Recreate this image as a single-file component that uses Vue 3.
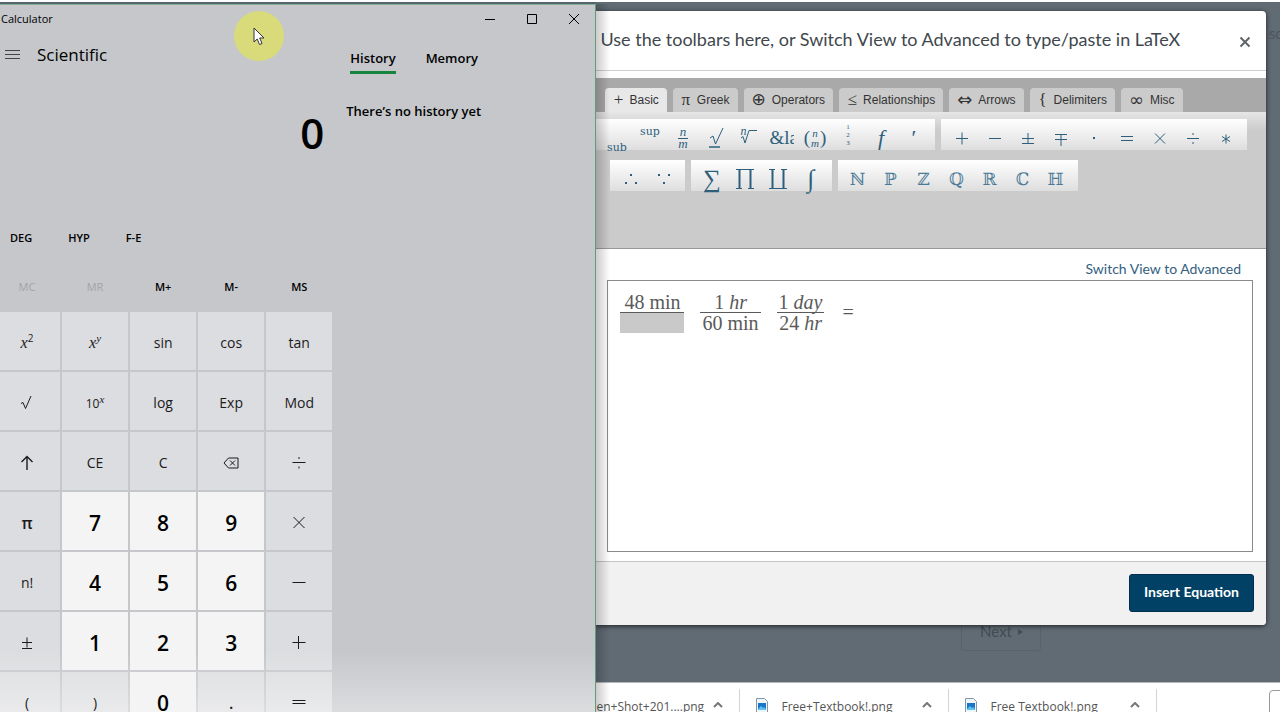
<script setup>
import { ref } from 'vue';

const calcTab = ref('History');
const activeTab = ref('Basic');

const memoryKeys = [
  { label: 'MC', disabled: true },
  { label: 'MR', disabled: true },
  { label: 'M+' },
  { label: 'M-' },
  { label: 'MS' },
];

// paths are drawn on a 16x16 grid
const keys = [
  { label: 'x', sup: '2', italic: true },
  { label: 'x', sup: 'y', italic: true, supItalic: true },
  { label: 'sin' },
  { label: 'cos' },
  { label: 'tan' },
  { name: 'Square root', path: 'M2 8.5 L4 7.5 L6.5 13.5 L12 1' },
  { label: '10', sup: 'x', supItalic: true, small: true },
  { label: 'log' },
  { label: 'Exp' },
  { label: 'Mod' },
  { name: 'Shift', path: 'M8 15 V2 M2.5 7 L8 1.5 L13.5 7', bold: true },
  { label: 'CE' },
  { label: 'C' },
  { name: 'Backspace', path: 'M5.5 3 H15 V13 H5.5 L1 8 Z M7 5.5 L12 10.5 M12 5.5 L7 10.5' },
  { name: 'Divide', path: 'M1.5 7.5 H14.5 M8 2 V4 M8 11.5 V13.5' },
  { label: 'π', strong: true },
  { label: '7', digit: true },
  { label: '8', digit: true },
  { label: '9', digit: true },
  { name: 'Multiply', path: 'M2.5 2 L13.5 13 M13.5 2 L2.5 13' },
  { label: 'n!' },
  { label: '4', digit: true },
  { label: '5', digit: true },
  { label: '6', digit: true },
  { name: 'Minus', path: 'M1.5 7.5 H14.5' },
  { name: 'Plus minus', path: 'M3 7.5 H13 M8 2.5 V12.5 M3 13.5 H13' },
  { label: '1', digit: true },
  { label: '2', digit: true },
  { label: '3', digit: true },
  { name: 'Plus', path: 'M1.5 7.5 H14.5 M7.5 1 V14' },
  { label: '(' },
  { label: ')' },
  { label: '0', digit: true },
  { label: '.', strong: true },
  { name: 'Equals', path: 'M1.5 5.5 H14.5 M1.5 8.5 H14.5' },
];

const tabs = [
  { icon: '+', label: 'Basic' },
  { icon: 'π', label: 'Greek' },
  { icon: '⊕', label: 'Operators' },
  { icon: '≤', label: 'Relationships' },
  { icon: '⇔', label: 'Arrows', wide: true },
  { icon: '{', label: 'Delimiters' },
  { icon: '∞', label: 'Misc', wide: true },
];

const signs = [
  { name: 'plus', path: 'M2 8.5 H14 M8 2.5 V14.5' },
  { name: 'minus', path: 'M2 8.5 H14' },
  { name: 'plus or minus', path: 'M2 8.5 H14 M8 3 V14 M2 13.5 H14' },
  { name: 'minus or plus', path: 'M2 4.5 H14 M2 9.5 H14 M8 4.5 V16' },
  { name: 'dot', path: 'M7 8.5 H9 M7 7.5 H9' },
  { name: 'equals', path: 'M2 6.5 H14 M2 10.5 H14' },
  { name: 'times', path: 'M3 3.5 L13 13.5 M13 3.5 L3 13.5' },
  { name: 'divide', path: 'M2 8.5 H14 M8 3 V5 M8 12 V14' },
  { name: 'asterisk', path: 'M8 4.5 V13.5 M4 6.5 L12 11.5 M12 6.5 L4 11.5' },
];

const letters = ['ℕ', 'ℙ', 'ℤ', 'ℚ', 'ℝ', 'ℂ', 'ℍ'];

const downloads = ['en+Shot+201....png', 'Free+Textbook!.png', 'Free Textbook!.png'];
</script>

<template>
  <div class="screen">
    <div class="desktop">
      <section class="calculator">
        <header class="title-bar">
          <span class="title">Calculator</span>
          <button class="window-btn" aria-label="Minimize">
            <svg viewBox="0 0 12 12"><path d="M1 6.5 H11" /></svg>
          </button>
          <button class="window-btn" aria-label="Maximize">
            <svg viewBox="0 0 12 12"><path d="M1.5 1.5 H10.5 V10.5 H1.5 Z" /></svg>
          </button>
          <button class="window-btn" aria-label="Close">
            <svg viewBox="0 0 12 12"><path d="M1 1 L11 11 M11 1 L1 11" /></svg>
          </button>
        </header>
        <div class="calc-body">
          <div class="calc-main">
            <div class="mode">
              <button class="menu-btn" aria-label="Menu">
                <svg viewBox="0 0 15 12"><path d="M0 1.5 H15 M0 5.5 H15 M0 9.5 H15" /></svg>
              </button>
              <span>Scientific</span>
            </div>
            <output class="display">0</output>
            <div class="options">
              <button>DEG</button>
              <button>HYP</button>
              <button>F-E</button>
            </div>
            <div class="memory-row">
              <button v-for="key in memoryKeys" :key="key.label" :disabled="key.disabled">{{ key.label }}</button>
            </div>
            <div class="keypad">
              <button
                v-for="(key, i) in keys"
                :key="i"
                class="key"
                :class="{ digit: key.digit, strong: key.strong, small: key.small }"
                :aria-label="key.name"
              >
                <svg v-if="key.path" viewBox="0 0 16 16" :class="{ bold: key.bold }"><path :d="key.path" /></svg>
                <span v-else :class="{ italic: key.italic }">{{ key.label }}<sup v-if="key.sup" :class="{ italic: key.supItalic }">{{ key.sup }}</sup></span>
              </button>
            </div>
          </div>
          <aside class="history">
            <nav class="history-tabs">
              <button
                v-for="name in ['History', 'Memory']"
                :key="name"
                :class="{ active: calcTab === name }"
                @click="calcTab = name"
              >{{ name }}</button>
            </nav>
            <p>There’s no history yet</p>
          </aside>
        </div>
        <div class="pointer">
          <svg viewBox="0 0 12 19"><path d="M1 1 V15 L4.2 12 L6.5 17.5 L9 16.5 L6.7 11 H11 Z" /></svg>
        </div>
      </section>

      <section class="browser">
        <main class="page">
          <span class="page-text">scr</span>
          <button class="next-btn">Next <i></i></button>
          <div class="dialog" role="dialog" aria-labelledby="dialog-title">
            <header class="dialog-header">
              <h1 id="dialog-title">Use the toolbars here, or Switch View to Advanced to type/paste in LaTeX</h1>
              <button class="close-btn" aria-label="Close">
                <svg viewBox="0 0 12 12"><path d="M1.5 1.5 L10.5 10.5 M10.5 1.5 L1.5 10.5" /></svg>
              </button>
            </header>
            <div class="tabs">
              <button
                v-for="tab in tabs"
                :key="tab.label"
                class="tab"
                :class="{ active: activeTab === tab.label }"
                @click="activeTab = tab.label"
              ><span class="tab-icon" :class="{ wide: tab.wide }">{{ tab.icon }}</span>{{ tab.label }}</button>
            </div>
            <div class="toolbar">
              <div class="tool-row">
                <div class="group">
                  <button class="low">sub</button>
                  <button class="high">sup</button>
                  <button><span class="frac"><i>n</i><i>m</i></span></button>
                  <button aria-label="square root">
                    <svg class="tall" viewBox="0 0 20 24"><path d="M4 12 L7 10 L9.5 18 L17 2" /><path class="thick" d="M3 21 H14" /></svg>
                  </button>
                  <button class="root" aria-label="nth root">
                    <i>n</i><svg class="tall" viewBox="0 0 16 24"><path d="M0 12 L2 10.5 L4 17 L8 4.5 H16" /></svg>
                  </button>
                  <button><span class="clip">&amp;la</span></button>
                  <button class="choose"><span class="paren">(</span><span class="binom"><i>n</i><i>m</i></span><span class="paren">)</span></button>
                  <button class="stack"><span>1</span><span>2</span><span>3</span></button>
                  <button class="func"><i>f</i></button>
                  <button class="prime">′</button>
                </div>
                <div class="group">
                  <button v-for="sign in signs" :key="sign.name" :aria-label="sign.name">
                    <svg class="sign" viewBox="0 0 16 16"><path :d="sign.path" /></svg>
                  </button>
                </div>
              </div>
              <div class="tool-row second">
                <div class="group">
                  <button aria-label="therefore">
                    <svg class="dots" viewBox="0 0 16 16"><path d="M2 12 h2 M7 4 h2 M12 12 h2" /></svg>
                  </button>
                  <button aria-label="because">
                    <svg class="dots" viewBox="0 0 16 16"><path d="M2 4 h2 M7 12 h2 M12 4 h2" /></svg>
                  </button>
                </div>
                <div class="group large">
                  <button>∑</button>
                  <button aria-label="product">
                    <svg class="product" viewBox="0 0 20 24"><path d="M1 2.5 H19 M1 21.5 H7 M13 21.5 H19" /><path class="stem" d="M4.5 2 V22 M15.5 2 V22" /></svg>
                  </button>
                  <button aria-label="coproduct">
                    <svg class="product" viewBox="0 0 20 24"><path d="M1 21.5 H19 M1 2.5 H7 M13 2.5 H19" /><path class="stem" d="M4.5 2 V22 M15.5 2 V22" /></svg>
                  </button>
                  <button>∫</button>
                </div>
                <div class="group board">
                  <button v-for="letter in letters" :key="letter">{{ letter }}</button>
                </div>
              </div>
            </div>
            <div class="editor">
              <a href="#" class="switch">Switch View to Advanced</a>
              <div class="equation" role="textbox" aria-label="Equation" contenteditable="true" spellcheck="false">
                <span class="fraction"><span>48 min</span><span class="blank"></span></span>
                <span class="fraction"><span>1 <i>hr</i></span><span>60 min</span></span>
                <span class="fraction"><span>1 <i>day</i></span><span>24 <i>hr</i></span></span>
                <span class="equals">=</span>
              </div>
            </div>
            <footer class="dialog-footer">
              <button class="insert-btn">Insert Equation</button>
            </footer>
          </div>
        </main>
        <div class="shelf">
          <div v-for="(file, i) in downloads" :key="file" class="download">
            <svg v-if="i > 0" class="file-icon" viewBox="0 0 12 15">
              <path d="M0.5 0.5 H8.5 L11.5 3.5 V14.5 H0.5 Z" fill="#eef5fb" stroke="#8796a3" />
              <rect x="2" y="5" width="8" height="7" fill="#1976c9" />
              <path d="M2 11 L5 8 L7 10 L8 9 L10 11 V12 H2 Z" fill="#5cc0f0" />
            </svg>
            <span class="file-name">{{ file }}</span>
            <button class="caret" aria-label="Options">
              <svg viewBox="0 0 10 6"><path d="M1 5 L5 1 L9 5" /></svg>
            </button>
          </div>
          <button class="show-all" aria-label="Show all"></button>
        </div>
      </section>
    </div>
  </div>
</template>

<style>
body {
  background: #fff;
}
</style>

<style scoped>
* {
  box-sizing: border-box;
}
button {
  margin: 0;
  padding: 0;
  border: 0;
  background: none;
  font: inherit;
  color: inherit;
}
svg {
  display: block;
  fill: none;
  stroke: currentColor;
}
.screen {
  height: 100vh;
  min-height: 480px;
  padding: 2px 0 8px;
  overflow: hidden;
}
.desktop {
  display: flex;
  height: 100%;
  overflow: hidden;
  background: #59636c;
}

/* calculator window */
.calculator {
  position: relative;
  z-index: 2;
  display: flex;
  flex-direction: column;
  flex: 0 0 auto;
  width: 46.6%;
  margin-top: 2px;
  overflow: hidden;
  border-top: 1px solid #7fb199;
  border-right: 1px solid #5f9c7b;
  background: linear-gradient(to bottom, #c5c7cb calc(100% - 60px), #dcdddf);
  color: #000;
  font-family: "Open Sans", "Noto Sans", sans-serif;
}
.title-bar {
  display: flex;
  align-items: center;
  flex: 0 0 27px;
}
.title {
  flex: 1;
  padding-left: 1px;
  font-size: 11px;
}
.window-btn {
  display: flex;
  align-items: center;
  justify-content: center;
  width: 42px;
  height: 27px;
}
.window-btn svg {
  width: 12px;
  height: 12px;
}
.calc-body {
  display: flex;
  flex: 1;
  min-height: 0;
}
.calc-main {
  width: 55.8%;
  overflow: hidden;
}
.mode {
  display: flex;
  align-items: center;
  gap: 17px;
  height: 45px;
  padding-left: 5px;
  font-size: 17px;
}
.menu-btn svg {
  width: 15px;
  height: 12px;
  stroke: #444;
}
.display {
  display: block;
  height: 136px;
  padding-right: 8px;
  font-size: 42px;
  font-weight: 600;
  line-height: 112px;
  text-align: right;
}
.options {
  display: flex;
  gap: 36px;
  height: 48px;
  padding-left: 10px;
  font-size: 11px;
  font-weight: 600;
}
.memory-row,
.keypad {
  display: grid;
  grid-template-columns: repeat(5, 1fr);
  gap: 2px;
  margin-left: -6px;
}
.memory-row {
  height: 51px;
  padding-bottom: 1px;
  font-size: 11px;
  font-weight: 600;
}
.memory-row button:disabled {
  color: #a2a4a8;
  font-weight: 400;
}
.keypad {
  grid-auto-rows: 58px;
}
.key {
  display: flex;
  align-items: center;
  justify-content: center;
  padding-top: 3px;
  background: rgba(255, 255, 255, 0.4);
  color: #1b1b1d;
  font-size: 14px;
}
.key svg {
  width: 16px;
  height: 16px;
}
.key svg.bold {
  stroke-width: 1.4;
}
.key.small {
  font-size: 12px;
}
.key.strong {
  font-size: 16px;
  font-weight: 600;
}
.key.digit {
  background: #f4f4f4;
  color: #000;
  font-size: 21px;
  font-weight: 600;
}
.key sup {
  font-size: 10px;
  line-height: 1;
}
.italic {
  font-family: "Liberation Serif", serif;
  font-style: italic;
  font-size: 16px;
}
.key sup.italic {
  font-size: 11px;
}
.key .italic sup:not(.italic) {
  font-family: "Open Sans", sans-serif;
  font-style: normal;
}
.history {
  flex: 1;
  padding: 15px 14px 0;
  font-size: 13px;
  font-weight: 600;
}
.history-tabs {
  display: flex;
  gap: 30px;
  padding-left: 4px;
}
.history-tabs button {
  height: 27px;
  padding-bottom: 2px;
  border-bottom: 3px solid transparent;
}
.history-tabs button.active {
  border-color: #16843f;
}
.history p {
  margin: 27px 0 0;
  line-height: 20px;
}
.pointer {
  position: absolute;
  top: 6px;
  left: 234px;
  display: flex;
  align-items: center;
  justify-content: center;
  width: 50px;
  height: 50px;
  border-radius: 50%;
  background: #d9db7b;
}
.pointer svg {
  width: 12px;
  height: 19px;
  fill: #fff;
  stroke: #33353a;
}

/* browser side */
.browser {
  display: flex;
  flex: 1;
  flex-direction: column;
  min-width: 0;
}
.browser::before {
  content: "";
  position: absolute;
  z-index: 1;
  top: 4px;
  bottom: 8px;
  width: 14px;
  background: linear-gradient(to right, rgba(0, 0, 0, 0.2), transparent);
}
.page {
  position: relative;
  flex: 1;
  min-height: 0;
  padding: 9px 14px 0 0;
  background: #616b74;
}
.page-text {
  position: absolute;
  top: 22px;
  right: -8px;
  color: #4b555e;
  font: 15px "Lato", sans-serif;
}
.next-btn {
  position: absolute;
  bottom: 31px;
  left: 365px;
  width: 80px;
  height: 40px;
  border: 1px solid #58626b;
  border-radius: 3px;
  color: #434b53;
  font: 15px "Lato", sans-serif;
}
.next-btn i {
  display: inline-block;
  margin: 0 0 2px 2px;
  border: 3px solid transparent;
  border-left: 5px solid #434b53;
  border-right: 0;
}
.dialog {
  position: relative;
  display: flex;
  flex-direction: column;
  height: calc(100% - 57px);
  border-radius: 0 4px 4px 0;
  background: #fff;
  box-shadow: 0 1px 5px rgba(0, 0, 0, 0.7);
  font-family: "Lato", sans-serif;
}
.dialog-header {
  display: flex;
  align-items: center;
  justify-content: space-between;
  height: 60px;
  margin-bottom: 7px;
  padding: 0 15px 4px 4px;
  border-bottom: 1px solid #cfcfcf;
}
.dialog-header h1 {
  margin: 0;
  color: #41474d;
  font-size: 18px;
  font-weight: 400;
  white-space: nowrap;
}
.close-btn svg {
  width: 12px;
  height: 12px;
  margin-top: 6px;
  stroke: #606468;
  stroke-width: 2;
}
.tabs {
  display: flex;
  align-items: flex-end;
  gap: 6px;
  height: 34px;
  padding-left: 9px;
  background: #a9a9a9;
}
.tab {
  display: flex;
  align-items: center;
  gap: 6px;
  height: 24px;
  padding: 0 8px;
  border-radius: 4px 4px 0 0;
  background: #cbcbcb;
  color: #333;
  font-family: "Liberation Sans", sans-serif;
  font-size: 12px;
}
.tab.active {
  background: #e8e8e8;
}
.tab-icon {
  min-width: 10px;
  font-family: "Liberation Serif", "DejaVu Sans", serif;
  font-size: 17px;
  line-height: 20px;
}
.tab-icon.wide {
  font-family: "DejaVu Sans", sans-serif;
  font-size: 18px;
}
.toolbar {
  height: 137px;
  padding-top: 7px;
  border-bottom: 1px solid #999;
  background: linear-gradient(#e6e6e6, #cbcbcb 18px);
}
.tool-row {
  display: flex;
  gap: 6px;
  margin-bottom: 10px;
}
.tool-row.second {
  margin-left: 14px;
}
.group {
  display: flex;
  height: 31px;
  padding: 0 5px 0 4px;
  background: linear-gradient(#fff, #dedede);
  color: #2d5f7c;
  font-family: "Liberation Serif", "DejaVu Serif", serif;
}
.group button {
  display: flex;
  align-items: center;
  justify-content: center;
  width: 33px;
  height: 38px;
}
.group .low,
.group .high {
  font-family: "DejaVu Serif", serif;
  font-size: 11px;
}
.group .low {
  padding-top: 18px;
}
.group .high {
  padding-bottom: 14px;
}
.frac,
.binom {
  display: flex;
  flex-direction: column;
  font-size: 13px;
  line-height: 10px;
  text-align: center;
}
.frac i:first-child {
  padding-bottom: 1px;
  border-bottom: 1px solid;
}
.binom {
  font-size: 11px;
  line-height: 10px;
}
.choose {
  gap: 1px;
}
.paren {
  font-size: 19px;
}
.tall {
  width: 20px;
  height: 24px;
}
.thick {
  stroke-width: 1.5;
}
.root i {
  align-self: flex-start;
  padding-top: 5px;
  font-size: 12px;
}
.root svg {
  width: 16px;
  margin-left: -5px;
}
.clip {
  width: 25px;
  overflow: hidden;
  font-size: 19px;
}
.group .stack {
  flex-direction: column;
  padding-bottom: 6px;
  font-size: 7px;
  line-height: 8px;
}
.func {
  font-size: 22px;
}
.group .prime {
  font-size: 22px;
}
.sign {
  width: 16px;
  height: 16px;
}
.dots {
  width: 16px;
  height: 16px;
  stroke-width: 2;
}
.large {
  font-size: 25px;
}
.product {
  width: 20px;
  height: 24px;
}
.stem {
  stroke-width: 2;
}
.board {
  color: #4b7a96;
  font-family: "DejaVu Serif", "DejaVu Sans", serif;
  font-size: 17px;
}
.board button {
  padding-right: 3px;
}
.editor {
  display: flex;
  flex: 1;
  flex-direction: column;
  min-height: 0;
  padding: 10px 13px 9px 11px;
}
.switch {
  align-self: flex-end;
  margin-right: 12px;
  color: #33617f;
  font-size: 14px;
  line-height: 20px;
  text-decoration: none;
}
.equation {
  display: flex;
  align-items: flex-start;
  gap: 16px;
  flex: 1;
  margin-top: 1px;
  padding: 11px 12px;
  border: 1px solid #8a8a8a;
  color: #5a5a5a;
  font-family: "Liberation Serif", serif;
  font-size: 20px;
  line-height: 20px;
}
.fraction {
  display: flex;
  flex-direction: column;
  text-align: center;
}
.fraction > span {
  padding: 0 2px;
}
.fraction > span:first-child {
  border-bottom: 1px solid #5a5a5a;
}
.blank {
  width: 64px;
  height: 20px;
  background: #c9c9c9;
}
.equals {
  margin: 10px 0 0 2px;
}
.dialog-footer {
  display: flex;
  align-items: center;
  justify-content: flex-end;
  height: 64px;
  padding: 0 12px 2px 0;
  border-top: 1px solid #c4c4c4;
  border-radius: 0 0 4px 0;
  background: #f1f1f1;
}
.insert-btn {
  height: 38px;
  padding: 0 14px 2px;
  border: 1px solid #00304f;
  border-radius: 3px;
  background: #014166;
  color: #fff;
  font-size: 14px;
  font-weight: 700;
}
.shelf {
  display: flex;
  flex: 0 0 30px;
  overflow: hidden;
  border-top: 1px solid #b5b8bb;
  background: #fff;
}
.download {
  display: flex;
  align-items: center;
  flex: 0 0 209px;
  height: 46px;
  margin-top: 6px;
  padding: 0 16px 12px;
  border-left: 1px solid #d4d4d4;
}
.download:first-child {
  flex-basis: 143px;
  padding-left: 0;
  border-left: 0;
}
.download:nth-child(3) {
  border-right: 1px solid #d4d4d4;
}
.file-icon {
  width: 12px;
  height: 15px;
  margin: 0 13px 2px 0;
  stroke: none;
}
.file-name {
  flex: 1;
  color: #555;
  font-family: "Open Sans", sans-serif;
  font-size: 12px;
  white-space: nowrap;
}
.caret svg {
  width: 10px;
  height: 6px;
  margin-bottom: 2px;
  stroke: #777;
  stroke-width: 2;
}
.show-all {
  flex: 0 0 60px;
  height: 40px;
  margin: 7px 0 0 auto;
  margin-right: -49px;
  border: 1px solid #999;
  border-radius: 4px;
}
</style>
